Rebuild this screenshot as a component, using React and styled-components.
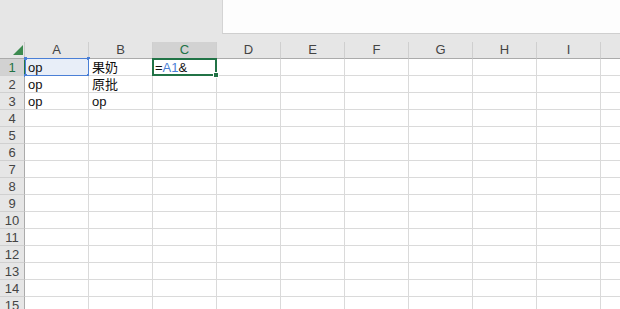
import React from 'react';
import styled, { createGlobalStyle } from 'styled-components';

const GlobalStyle = createGlobalStyle`
  html, body {
    margin: 0;
    padding: 0;
    background: #e6e6e6;
    overflow: hidden;
  }
  body {
    font-family: "Liberation Sans", "Noto Sans CJK SC", sans-serif;
  }
`;

const GREEN = '#217346';
const BLUE = '#4a7fd6';

const Page = styled.div`
  width: 620px;
  height: 309px;
  display: flex;
  flex-direction: column;
  background: #e6e6e6;
  overflow: hidden;
`;

const TopBar = styled.div`
  height: 34px;
  display: flex;
  flex-shrink: 0;
`;

const NameArea = styled.div`
  width: 222px;
  background: #e6e6e6;
`;

const FormulaBox = styled.div`
  flex: 1;
  background: #fdfdfd;
  border-left: 1px solid #d4d4d4;
  border-bottom: 1px solid #cfcfcf;
`;

const Spacer = styled.div`
  height: 8px;
  flex-shrink: 0;
`;

const Sheet = styled.div`
  display: grid;
  grid-template-columns: 25px repeat(10, 64px);
  grid-auto-rows: 17px;
  background: #fff;
  font-size: 13px;
`;

const Corner = styled.div`
  box-sizing: border-box;
  background: #e6e6e6;
  border-right: 1px solid #c8c8c8;
  border-bottom: 1px solid #ababab;
  display: flex;
  align-items: flex-end;
  justify-content: flex-end;
  padding: 0 1px 3px 0;
  svg {
    display: block;
  }
`;

const ColHead = styled.div`
  box-sizing: border-box;
  background: ${(p) => (p.$selected ? '#d2d2d2' : '#e6e6e6')};
  color: ${(p) => (p.$selected ? GREEN : '#444')};
  border-right: 1px solid #cfcfcf;
  border-bottom: 1px solid #ababab;
  text-align: center;
  line-height: 16px;
`;

const RowHead = styled.div`
  box-sizing: border-box;
  background: ${(p) => (p.$selected ? '#d2d2d2' : '#e6e6e6')};
  color: ${(p) => (p.$selected ? GREEN : '#444')};
  border-right: 1px solid ${(p) => (p.$selected ? GREEN : '#ababab')};
  border-bottom: 1px solid #d0d0d0;
  text-align: center;
  line-height: 17px;
`;

const Cell = styled.div`
  box-sizing: border-box;
  position: relative;
  background: ${(p) => (p.$refd ? '#e8eef8' : '#fff')};
  border-right: 1px solid #dadada;
  border-bottom: 1px solid #dadada;
  padding-left: 3px;
  line-height: 17px;
  color: #111;
  white-space: nowrap;
`;

const RefFrame = styled.span`
  position: absolute;
  left: 0;
  top: -1px;
  right: -1px;
  bottom: -1px;
  border: 1px solid ${BLUE};
  pointer-events: none;
`;

const RefDot = styled.i`
  position: absolute;
  width: 3px;
  height: 3px;
  background: ${BLUE};
  ${(p) => (p.$top ? 'top: -2px;' : 'bottom: -2px;')}
  ${(p) => (p.$left ? 'left: -2px;' : 'right: -2px;')}
`;

const ActiveFrame = styled.span`
  position: absolute;
  left: -1px;
  top: -1px;
  right: -1px;
  bottom: -1px;
  border: 2px solid ${GREEN};
  pointer-events: none;
  z-index: 2;
`;

const FillHandle = styled.i`
  position: absolute;
  right: -4px;
  bottom: -4px;
  width: 4px;
  height: 4px;
  background: ${GREEN};
  border: 1px solid #fff;
`;

const Formula = styled.span`
  padding-left: 0;
  margin-left: -1px;
`;

const RefText = styled.span`
  color: ${BLUE};
`;

const cols = ['A', 'B', 'C', 'D', 'E', 'F', 'G', 'H', 'I', 'J'];

const data = {
  1: { A: 'op', B: '果奶' },
  2: { A: 'op', B: '原批' },
  3: { A: 'op', B: 'op' },
};

const renderCell = (row, col) => {
  const key = `${col}${row}`;
  if (key === 'A1') {
    return (
      <Cell key={key} $refd>
        {data[row][col]}
        <RefFrame>
          <RefDot $top $left />
          <RefDot $top />
          <RefDot $left />
          <RefDot />
        </RefFrame>
      </Cell>
    );
  }
  if (key === 'C1') {
    return (
      <Cell key={key}>
        <Formula>
          =<RefText>A1</RefText>&amp;
        </Formula>
        <ActiveFrame>
          <FillHandle />
        </ActiveFrame>
      </Cell>
    );
  }
  return <Cell key={key}>{data[row] && data[row][col]}</Cell>;
};

export default function App() {
  const rows = Array.from({ length: 15 }, (_, i) => i + 1);
  return (
    <Page>
      <GlobalStyle />
      <TopBar>
        <NameArea />
        <FormulaBox />
      </TopBar>
      <Spacer />
      <Sheet>
        <Corner>
          <svg width="10" height="10" viewBox="0 0 10 10">
            <polygon points="10,0 10,10 0,10" fill="#3c8a4f" />
          </svg>
        </Corner>
        {cols.map((c) => (
          <ColHead key={c} $selected={c === 'C'}>
            {c}
          </ColHead>
        ))}
        {rows.map((r) => (
          <React.Fragment key={r}>
            <RowHead $selected={r === 1}>{r}</RowHead>
            {cols.map((c) => renderCell(r, c))}
          </React.Fragment>
        ))}
      </Sheet>
    </Page>
  );
}
